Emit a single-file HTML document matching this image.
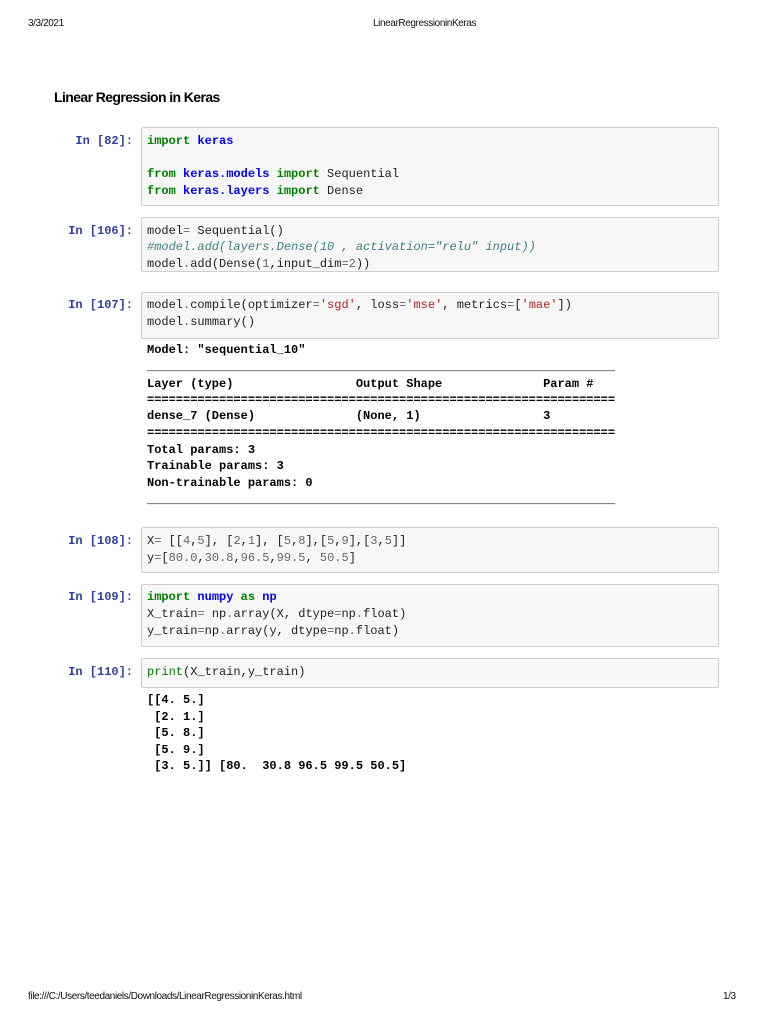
<!DOCTYPE html>
<html><head><meta charset="utf-8"><style>
body{margin:0;width:768px;height:1024px;background:#fff;position:relative;font-family:"Liberation Mono",monospace;}
.hd{position:absolute;font-family:"Liberation Sans",sans-serif;font-size:10px;color:#111;letter-spacing:-0.4px;}
.title{position:absolute;left:54px;top:89px;font-family:"Liberation Sans",sans-serif;font-weight:bold;font-size:14px;letter-spacing:-0.6px;color:#000;}
.box{position:absolute;left:141px;width:576px;border:1px solid #cfcfcf;background:#f7f7f7;border-radius:2px;}
.p{position:absolute;right:635px;font-size:12px;font-weight:bold;color:#303f9f;white-space:pre;}
.l{position:absolute;left:147px;font-size:12px;line-height:16px;white-space:pre;color:#222;}
.o{font-weight:bold;color:#000;}
.k{color:#008000;font-weight:bold}.n{color:#0000ff;font-weight:bold}.s{color:#ba2121}.c{color:#408080;font-style:italic}.d{color:#666}
</style></head><body>
<div class="hd" style="left:28px;top:18px">3/3/2021</div>
<div class="hd" style="left:373px;top:18px">LinearRegressioninKeras</div>
<div class="title">Linear Regression in Keras</div>

<div class="box" style="top:127px;height:77px"></div>
<div class="p" style="top:134px">In [82]:</div>
<div class="l" style="top:133px"><span class="k">import</span> <span class="n">keras</span></div>
<div class="l" style="top:166px"><span class="k">from</span> <span class="n">keras.models</span> <span class="k">import</span> Sequential</div>
<div class="l" style="top:183px"><span class="k">from</span> <span class="n">keras.layers</span> <span class="k">import</span> Dense</div>

<div class="box" style="top:217px;height:53px"></div>
<div class="p" style="top:224px">In [106]:</div>
<div class="l" style="top:223px">model<span class="d">=</span> Sequential()</div>
<div class="l" style="top:239px"><span class="c">#model.add(layers.Dense(10 , activation="relu" input))</span></div>
<div class="l" style="top:256px">model<span class="d">.</span>add(Dense(<span class="d">1</span>,input_dim<span class="d">=2</span>))</div>

<div class="box" style="top:292px;height:45px"></div>
<div class="p" style="top:298px">In [107]:</div>
<div class="l" style="top:297px">model<span class="d">.</span>compile(optimizer<span class="d">=</span><span class="s">'sgd'</span>, loss<span class="d">=</span><span class="s">'mse'</span>, metrics<span class="d">=</span>[<span class="s">'mae'</span>])</div>
<div class="l" style="top:314px">model<span class="d">.</span>summary()</div>

<div class="l o" style="top:342px">Model: "sequential_10"</div>
<div class="l o" style="top:359px">_________________________________________________________________</div>
<div class="l o" style="top:376px">Layer (type)                 Output Shape              Param #   </div>
<div class="l o" style="top:392px">=================================================================</div>
<div class="l o" style="top:408px">dense_7 (Dense)              (None, 1)                 3         </div>
<div class="l o" style="top:425px">=================================================================</div>
<div class="l o" style="top:442px">Total params: 3</div>
<div class="l o" style="top:458px">Trainable params: 3</div>
<div class="l o" style="top:475px">Non-trainable params: 0</div>
<div class="l o" style="top:492px">_________________________________________________________________</div>

<div class="box" style="top:527px;height:44px"></div>
<div class="p" style="top:534px">In [108]:</div>
<div class="l" style="top:533px">X<span class="d">=</span> [[<span class="d">4</span>,<span class="d">5</span>], [<span class="d">2</span>,<span class="d">1</span>], [<span class="d">5</span>,<span class="d">8</span>],[<span class="d">5</span>,<span class="d">9</span>],[<span class="d">3</span>,<span class="d">5</span>]]</div>
<div class="l" style="top:550px">y<span class="d">=</span>[<span class="d">80.0</span>,<span class="d">30.8</span>,<span class="d">96.5</span>,<span class="d">99.5</span>, <span class="d">50.5</span>]</div>

<div class="box" style="top:584px;height:61px"></div>
<div class="p" style="top:590px">In [109]:</div>
<div class="l" style="top:589px"><span class="k">import</span> <span class="n">numpy</span> <span class="k">as</span> <span class="n">np</span></div>
<div class="l" style="top:606px">X_train<span class="d">=</span> np<span class="d">.</span>array(X, dtype<span class="d">=</span>np<span class="d">.</span>float)</div>
<div class="l" style="top:623px">y_train<span class="d">=</span>np<span class="d">.</span>array(y, dtype<span class="d">=</span>np<span class="d">.</span>float)</div>

<div class="box" style="top:658px;height:28px"></div>
<div class="p" style="top:665px">In [110]:</div>
<div class="l" style="top:664px"><span style="color:#008000">print</span>(X_train,y_train)</div>

<div class="l o" style="top:692px">[[4. 5.]</div>
<div class="l o" style="top:709px"> [2. 1.]</div>
<div class="l o" style="top:725px"> [5. 8.]</div>
<div class="l o" style="top:742px"> [5. 9.]</div>
<div class="l o" style="top:758px"> [3. 5.]] [80.  30.8 96.5 99.5 50.5]</div>

<div class="hd" style="left:28px;top:991px">file:///C:/Users/teedaniels/Downloads/LinearRegressioninKeras.html</div>
<div class="hd" style="left:723px;top:991px">1/3</div>
</body></html>
